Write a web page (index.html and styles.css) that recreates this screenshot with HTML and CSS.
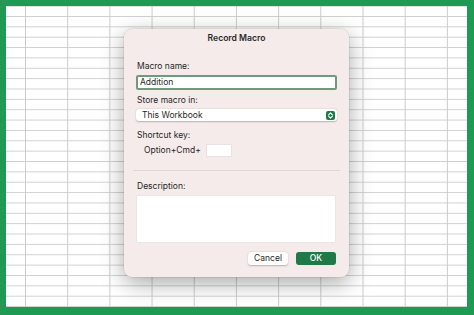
FILE: index.html
```html
<!DOCTYPE html>
<html lang="en">
<head>
    <meta charset="UTF-8">
    <meta name="viewport" content="width=device-width, initial-scale=1.0">
    <title>Record Macro</title>
    <link rel="stylesheet" href="styles.css">
</head>
<body>
    <div class="sheet">
        <div class="dialog">
            <div class="dialog-title">Record Macro</div>

            <div class="label label-first">Macro name:</div>
            <div class="text-field">Addition</div>

            <div class="label">Store macro in:</div>
            <div class="select">
                <span>This Workbook</span>
                <span class="stepper">
                    <svg width="9" height="9" viewBox="0 0 9 9">
                        <path d="M2.6 3.8 L4.5 1.9 L6.4 3.8" fill="none" stroke="#fff" stroke-width="1.1" stroke-linecap="round" stroke-linejoin="round"/>
                        <path d="M2.6 5.2 L4.5 7.1 L6.4 5.2" fill="none" stroke="#fff" stroke-width="1.1" stroke-linecap="round" stroke-linejoin="round"/>
                    </svg>
                </span>
            </div>

            <div class="label label-gap">Shortcut key:</div>
            <div class="shortcut-row">
                <span>Option+Cmd+</span>
                <span class="key-box"></span>
            </div>

            <div class="separator"></div>

            <div class="label label-desc">Description:</div>
            <div class="text-area"></div>

            <div class="buttons">
                <button class="cancel-btn">Cancel</button>
                <button class="ok-btn">OK</button>
            </div>
        </div>
    </div>
</body>
</html>
```

FILE: styles.css
```css
body {
    margin: 0;
    padding: 0;
    font-family: 'Inter', 'Liberation Sans', sans-serif;
    color: #262626;
}

.sheet {
    width: 474px;
    height: 315px;
    box-sizing: border-box;
    border-style: solid;
    border-color: #1f9a55;
    border-width: 6px 7px 8px 6px;
    background-color: #fff;
    background-image:
        linear-gradient(to right, #cbcbcb 1px, transparent 1px),
        linear-gradient(to bottom, #d0d0d0 1px, transparent 1px);
    background-size: 42.2px 100%, 100% 10.37px;
    background-position: 19px 0, 0 10px;
    display: flex;
    justify-content: center;
    align-items: flex-start;
    padding-top: 23px;
}

.dialog {
    width: 225px;
    height: 248px;
    box-sizing: border-box;
    background: #f5ebeb;
    border-radius: 8px;
    box-shadow: 0 6px 22px rgba(0, 0, 0, 0.35), 0 0 0 0.5px rgba(0, 0, 0, 0.12);
    padding: 0 12px 12px 12px;
    display: flex;
    flex-direction: column;
    font-size: 8.5px;
}

.dialog-title {
    height: 18px;
    line-height: 18px;
    text-align: center;
    font-weight: 600;
    font-size: 8.6px;
    color: #2a2a2a;
}

.label {
    height: 12px;
    line-height: 12px;
    padding-left: 1px;
    margin-top: 4px;
    margin-bottom: 3px;
}

.label-first {
    margin-top: 13px;
}

.label-gap {
    margin-top: 8px;
}

.label-desc {
    margin-top: 9px;
    margin-bottom: 4px;
}

.text-field {
    height: 15px;
    box-sizing: border-box;
    background: #fff;
    border: 2px solid #6f9b7c;
    border-radius: 2px;
    line-height: 11px;
    padding-left: 2px;
}

.select {
    height: 12px;
    box-sizing: border-box;
    background: #fff;
    border-radius: 3px;
    box-shadow: 0 0.5px 1.5px rgba(0, 0, 0, 0.25);
    display: flex;
    align-items: center;
    justify-content: space-between;
    padding: 0 2px 0 6px;
    line-height: 12px;
}

.stepper {
    width: 9px;
    height: 9px;
    background: #1e7a46;
    border-radius: 2px;
    display: flex;
}

.shortcut-row {
    height: 12px;
    display: flex;
    align-items: center;
    gap: 6px;
    padding-left: 8px;
}

.key-box {
    width: 24px;
    height: 11px;
    background: #fff;
    box-shadow: 0 0 0 0.5px rgba(0, 0, 0, 0.08);
}

.separator {
    height: 1px;
    background: #e0d4d4;
    margin: 14px -3px 0 -3px;
}

.text-area {
    height: 46px;
    background: #fff;
    margin-left: 1px;
    margin-right: 2px;
    box-shadow: 0 0 0 0.5px rgba(0, 0, 0, 0.06);
}

.buttons {
    margin-top: 10px;
    display: flex;
    justify-content: flex-end;
    gap: 8px;
    padding-right: 1px;
}

.cancel-btn,
.ok-btn {
    width: 40px;
    height: 13px;
    border: none;
    border-radius: 3px;
    padding: 0;
    font-family: inherit;
    font-size: 8.5px;
    line-height: 13px;
}

.cancel-btn {
    background: #fff;
    color: #262626;
    box-shadow: 0 0.5px 1.5px rgba(0, 0, 0, 0.25);
}

.ok-btn {
    background: #1e7a46;
    color: #fff;
    font-weight: 500;
}
```
